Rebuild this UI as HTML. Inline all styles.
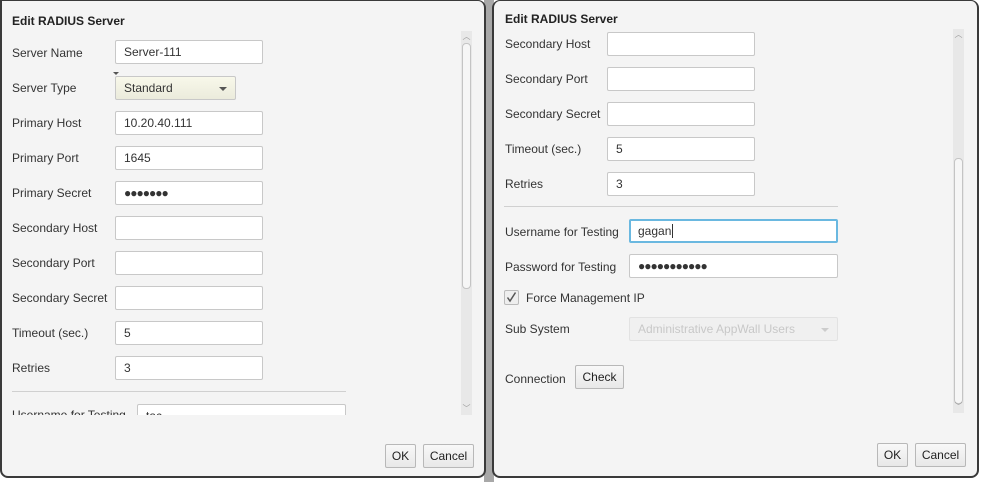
<!DOCTYPE html>
<html><head><style>
body{margin:0;width:981px;height:482px;background:#fff;position:relative;overflow:hidden;font-family:"Liberation Sans",sans-serif;font-size:12px;color:#333}
.dlg{position:absolute;top:0;height:478px;background:#f4f4f4;border:2px solid #3a3a3a;border-top:1px solid #3a3a3a;border-radius:0 0 8px 8px;box-sizing:border-box}
.a{position:absolute}
.t{font-weight:bold;font-size:12px;color:#222}
.in{position:absolute;height:24px;background:#fff;border:1px solid #c8c8c8;border-radius:2px;box-sizing:border-box;padding:4px 8px;font-size:12px;color:#333}
.sb{position:absolute;background:#e8e8e8;width:11px}
.th{position:absolute;left:1px;width:9px;background:#f6f6f6;border:1px solid #c4c4c4;border-radius:4px;box-sizing:border-box}
.ar{position:absolute;left:0;width:11px;text-align:center;font-size:8px;color:#999;line-height:10px}
.btn{position:absolute;height:24px;background:linear-gradient(#f8f8f8,#e8e8e8);border:1px solid #b8b8b8;border-radius:2px;box-sizing:border-box;text-align:center;line-height:22px;font-size:12px;color:#222}
.sep{position:absolute;height:1px;background:#d0d0d0}
</style></head><body>
<div style="position:absolute;left:484px;top:0;width:10px;height:482px;background:#a8a8a8"></div>
<div class="dlg" style="left:0;width:486px;border-radius:0 8px 8px 8px"></div>
<div class="dlg" style="left:492px;width:487px;border-radius:8px 8px 8px 8px"></div>

<!-- left -->
<div class="a t" style="left:12px;top:14px">Edit RADIUS Server</div>
<div style="position:absolute;left:3px;top:30px;width:455px;height:385px;overflow:hidden">
<div class="a" style="left:9px;top:16px">Server Name</div><div class="in" style="left:112px;top:10px;width:148px">Server-111</div>
<div class="a" style="left:9px;top:51px">Server Type</div>
<div class="in" style="left:112px;top:46px;width:121px;background:linear-gradient(#f8f8ea,#ebebdc)">Standard<span style="position:absolute;right:8px;top:10px;border:4px solid transparent;border-top:4px solid #555"></span></div>
<div class="a" style="left:110px;top:42px;border:3px solid transparent;border-top:3px solid #555"></div>
<div class="a" style="left:9px;top:86px">Primary Host</div><div class="in" style="left:112px;top:81px;width:148px">10.20.40.111</div>
<div class="a" style="left:9px;top:121px">Primary Port</div><div class="in" style="left:112px;top:116px;width:148px">1645</div>
<div class="a" style="left:9px;top:156px">Primary Secret</div><div class="in" style="left:112px;top:151px;width:148px;letter-spacing:-1px">●●●●●●●</div>
<div class="a" style="left:9px;top:191px">Secondary Host</div><div class="in" style="left:112px;top:186px;width:148px"></div>
<div class="a" style="left:9px;top:226px">Secondary Port</div><div class="in" style="left:112px;top:221px;width:148px"></div>
<div class="a" style="left:9px;top:261px">Secondary Secret</div><div class="in" style="left:112px;top:256px;width:148px"></div>
<div class="a" style="left:9px;top:296px">Timeout (sec.)</div><div class="in" style="left:112px;top:291px;width:148px">5</div>
<div class="a" style="left:9px;top:331px">Retries</div><div class="in" style="left:112px;top:326px;width:148px">3</div>
<div class="sep" style="left:9px;top:361px;width:334px"></div>
<div class="a" style="left:9px;top:378px">Username for Testing</div><div class="in" style="left:134px;top:374px;width:209px">tac</div>
</div>
<div class="sb" style="left:461px;top:31px;height:384px"><div class="ar" style="top:1px">︿</div><div class="th" style="top:12px;height:246px"></div><div class="ar" style="bottom:1px">﹀</div></div>
<div class="btn" style="left:385px;top:444px;width:31px">OK</div>
<div class="btn" style="left:423px;top:444px;width:51px">Cancel</div>

<!-- right -->
<div class="a t" style="left:505px;top:12px">Edit RADIUS Server</div>
<div class="a" style="left:505px;top:37px">Secondary Host</div><div class="in" style="left:607px;top:32px;width:148px"></div>
<div class="a" style="left:505px;top:72px">Secondary Port</div><div class="in" style="left:607px;top:67px;width:148px"></div>
<div class="a" style="left:505px;top:107px">Secondary Secret</div><div class="in" style="left:607px;top:102px;width:148px"></div>
<div class="a" style="left:505px;top:142px">Timeout (sec.)</div><div class="in" style="left:607px;top:137px;width:148px">5</div>
<div class="a" style="left:505px;top:177px">Retries</div><div class="in" style="left:607px;top:172px;width:148px">3</div>
<div class="sep" style="left:504px;top:206px;width:334px"></div>
<div class="a" style="left:505px;top:225px">Username for Testing</div><div class="in" style="left:629px;top:219px;width:209px;border:2px solid #6ab8e0;padding:3px 7px">gagan<span style="border-left:1px solid #333;margin-left:1px"></span></div>
<div class="a" style="left:505px;top:260px">Password for Testing</div><div class="in" style="left:629px;top:254px;width:209px;letter-spacing:-1px">●●●●●●●●●●●</div>
<div class="a" style="left:504px;top:290px;width:15px;height:15px;border:1px solid #bbb;background:#eee;border-radius:2px;box-sizing:border-box"><svg width="13" height="13" style="position:absolute;left:0;top:0"><path d="M2.5 6.5 L5 10 L10.5 1.5" stroke="#555" stroke-width="1.5" fill="none"/></svg></div>
<div class="a" style="left:526px;top:291px">Force Management IP</div>
<div class="a" style="left:505px;top:322px">Sub System</div>
<div class="in" style="left:629px;top:317px;width:209px;background:#f0f0f0;border-color:#e2e2e2;color:#c8c8c8">Administrative AppWall Users<span style="position:absolute;right:8px;top:10px;border:4px solid transparent;border-top:4px solid #ccc"></span></div>
<div class="a" style="left:505px;top:372px">Connection</div>
<div class="btn" style="left:575px;top:365px;width:49px">Check</div>
<div class="sb" style="left:953px;top:29px;height:384px"><div class="ar" style="top:1px">︿</div><div class="th" style="top:129px;height:246px"></div><div class="ar" style="bottom:1px">﹀</div></div>
<div class="btn" style="left:877px;top:443px;width:31px">OK</div>
<div class="btn" style="left:915px;top:443px;width:51px">Cancel</div>
</body></html>
